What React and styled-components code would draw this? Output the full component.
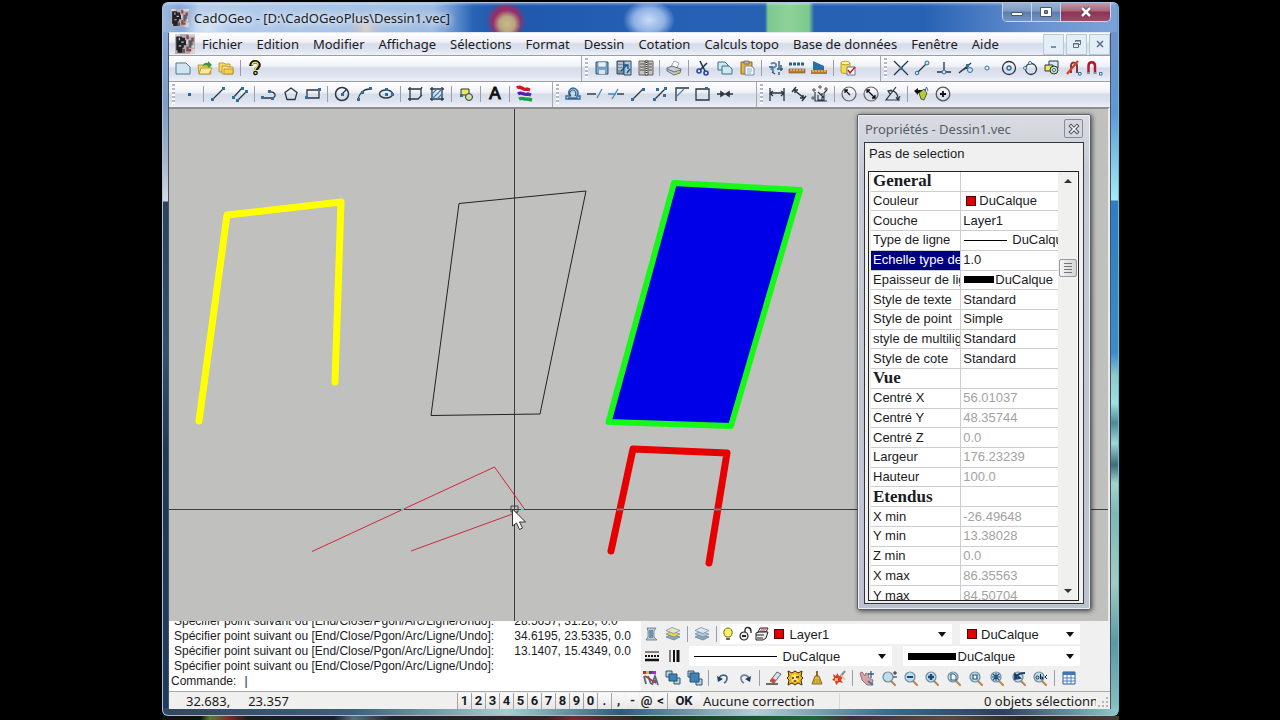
import React from "react";
import styled, { createGlobalStyle, css } from "styled-components";

const GlobalStyle = createGlobalStyle`
  * {
    box-sizing: border-box;
  }

  body {
    margin: 0;
    background: #000;
    font-family: "Liberation Sans", Arial, sans-serif;
    font-size: 13px;
    color: #1b1b24;
  }

  button, input, select {
    font: inherit;
    color: inherit;
    margin: 0;
    padding: 0;
    border: 0;
    background: none;
  }
`;

const uiFont = css`
  font-family: "Noto Sans", "Open Sans", sans-serif;
`;

const Desktop = styled.div`
  min-height: 100vh;
  display: flex;
  flex-direction: column;
  padding: 2px 161px 0 162px;
`;

const Window = styled.div`
  flex: 1;
  display: flex;
  flex-direction: column;
  min-height: 0;
  padding: 0 7px 6px 5px;
  border: 1px solid #a9c6e2;
  border-right-color: #4fc6dc;
  border-bottom-color: #6fd4de;
  border-radius: 6px;
  background:
    linear-gradient(90deg, #31475f 0, #3d6078 20%, #a8cdd0 36%, #315a78 48%, #b5cfd8 62%, #3b6a86 76%, #2d3f5c 88%, #8fc8cc 100%) left bottom / 100% 7px no-repeat,
    linear-gradient(180deg, #8fb0dc 0, #7d9cc6 100px, #aab8c8 160px, #d5dbe1 198px, #2c4258 199px, #34506c 350px, #22384f 450px, #1f3a5a 100%) left top / 8px 100% no-repeat,
    linear-gradient(180deg, #6f93cf 0, #6f93cf 40px, #5d9ad6 110px, #a6ecf6 197px, #2f7cc0 198px, #3c8ccc 350px, #8cc8cc 372px, #9fe0e0 400px, #4b8a98 420px, #9fd8d6 440px, #3c6c78 462px, #a6d4cc 480px, #7eb8b4 510px, #a4ccc0 580px, #5a98a4 640px, #8cc4c4 100%) right top / 8px 100% no-repeat,
    #3470b6;
`;

const DesktopStrip = styled.div`
  height: 4px;
  background: linear-gradient(90deg, #111 0, #111 4%, #5c7a3c 5%, #7c2a2a 7%, #1c1c22 9%, #16202c 18%, #58707c 20%, #20202a 24%, #33222a 40%, #6c2c34 43%, #1c2c20 50%, #24663c 68%, #38303a 72%, #5a4a44 82%, #282428 90%, #443c34 100%);
`;

const TitleBar = styled.header`
  display: flex;
  align-items: center;
  height: 29px;
  margin: 0 -6px 0 -5px;
  padding-left: 8px;
  border-radius: 5px 5px 0 0;
  background:
    linear-gradient(180deg, #ffffff55 0, #ffffff00 3px),
    linear-gradient(90deg, #ffffff00 16px, #d0e0f4bb 36px, #c4d8f0bb 270px, #b4cfee00 310px),
    radial-gradient(ellipse 22px 14px at 44px 26px, #e8f2fa 0, #e8f2fa00 100%),
    radial-gradient(circle 18px at 203px 26px, #f2c25c 0, #e0705a88 50%, #e0705a00 100%),
    radial-gradient(circle 14px at 344px 21px, #c8bc84 0, #b8a484 55%, #a0205a00 100%),
    radial-gradient(circle 22px at 343px 18px, #a3275c 0, #93306a 60%, #3a4a9000 90%),
    radial-gradient(ellipse 26px 20px at 486px 17px, #c9dcf4 0, #8db0e4 60%, #3a6ec000 100%),
    linear-gradient(90deg, #ffffff00 0, #ffffff00 602px, #7cc88c 605px, #8ed29a 626px, #7cc88c 646px, #ffffff00 651px),
    linear-gradient(90deg, #9db9de 0, #6f9cd6 30px, #2f6cbc 290px, #1f58ac 340px, #2560b4 480px, #2762b4 760px, #6c94d0 880px, #7ba2d8 100%);
`;

const TitleText = styled.h1`
  ${uiFont}
  flex: 1;
  margin: 0 0 0 5px;
  font-size: 13px;
  font-weight: 400;
  line-height: 18px;
  white-space: nowrap;
  text-shadow: 0 0 6px #fff, 0 0 10px #fff;
`;

const Caption = styled.div`
  display: flex;
  align-self: flex-start;
  height: 19px;
  margin-right: 6px;
  border: 1px solid #c6d8ee;
  border-top: 0;
  border-radius: 0 0 5px 5px;
  overflow: hidden;
`;

const CaptionButton = styled.button`
  display: flex;
  align-items: center;
  justify-content: center;
  width: ${p => (p.$close ? 49 : 29)}px;
  border-right: ${p => (p.$close ? 0 : "1px solid #c6d8ee")};
  background: ${p =>
    p.$close
      ? "linear-gradient(180deg, #c49aa8 0, #a8647c 45%, #8a3450 50%, #a04a6c 100%)"
      : "linear-gradient(180deg, #9cb4d4 0, #7f9cc6 45%, #5a7cae 50%, #7496c6 100%)"};
`;

const Client = styled.div`
  flex: 1;
  display: flex;
  flex-direction: column;
  min-height: 0;
  border: 1px solid #44546a;
  border-top: 1px solid #dfe8f2;
  border-bottom: 0;
  background: #f0f0f0;
`;

const band = css`
  background: linear-gradient(180deg, #ffffff 0, #f0f2f8 40%, #d7dce9 50%, #dfe4f0 80%, #eef1f8 100%);
`;

const MenuBar = styled.nav`
  ${uiFont}
  ${band}
  display: flex;
  align-items: center;
  height: 22px;
  padding: 0 0 0 6px;
`;

const MenuItem = styled.button`
  font-size: 13px;
  line-height: 20px;
  padding: 0 7px;
  white-space: nowrap;
`;

const MdiButtons = styled.div`
  display: flex;
  gap: 2px;
  margin-left: auto;
`;

const MdiButton = styled.button`
  display: flex;
  align-items: center;
  justify-content: center;
  width: 21px;
  height: 21px;
  border: 1px solid #b8c9da;
  background: #e4eef7;
`;

const ToolRow = styled.div`
  display: flex;
  height: 26px;
  border-top: 1px solid #9c9ea6;
`;

const ToolBand = styled.div`
  ${band}
  flex: ${p => (p.$width ? `0 1 ${p.$width}px` : "1 1 0")};
  display: flex;
  align-items: center;
  min-width: 0;
  padding: 0 0 2px 3px;
  border-left: ${p => (p.$first ? 0 : "1px solid #a4a8b2")};
`;

const Grip = styled.span`
  flex: 0 0 3px;
  height: 20px;
  margin-right: 3px;
  background: repeating-linear-gradient(180deg, #b4b8c4 0, #b4b8c4 2px, #ffffff 2px, #ffffff 4px);
`;

const Items = styled.div`
  display: flex;
  align-items: center;
  flex: 0 1 ${p => p.$width}px;
  min-width: 0;
`;

const ToolButton = styled.button`
  flex: 1 1 0;
  display: flex;
  align-items: center;
  justify-content: center;
  min-width: 0;
  height: 20px;
`;

const Separator = styled.span`
  flex: 0 0 7px;
  height: 16px;
  background: linear-gradient(90deg, #0000 3px, #9a9eac 3px, #9a9eac 4px, #0000 4px);
`;

const Icon = styled.svg`
  flex: none;
  display: block;
  width: ${p => p.$size || 16}px;
  height: ${p => p.$size || 16}px;
  overflow: visible;
`;

const Canvas = styled.main`
  flex: 1;
  position: relative;
  min-height: 0;
  border-top: 2px solid #8e8e8e;
  border-right: 2px solid #ececea;
  background: #c0c0be;
`;

const Drawing = styled.svg`
  position: absolute;
  left: 0;
  top: 0;
  width: 100%;
  height: 100%;
`;

const Palette = styled.section`
  position: absolute;
  top: 5px;
  right: 17px;
  width: 234px;
  padding: 0 6px 5px;
  border: 1px solid #5c626c;
  border-radius: 2px;
  background: linear-gradient(180deg, #d9dce2 0, #c5cad3 60px, #bcc3ce 100%);
  box-shadow: 1px 1px 5px #000a, inset 0 0 0 1px #eef0f4;
`;

const PaletteTitle = styled.div`
  ${uiFont}
  display: flex;
  align-items: center;
  justify-content: space-between;
  height: 27px;
  padding: 0 1px;
  font-size: 13px;
  color: #565c66;
`;

const PaletteClose = styled.button`
  display: flex;
  align-items: center;
  justify-content: center;
  width: 19px;
  height: 19px;
  border: 1px solid #868c96;
  border-radius: 2px;
  background: #d4d8de;
`;

const PaletteBody = styled.div`
  padding: 0 4px 2px 3px;
  border: 1px solid #33363c;
  background: #f0f0f0;
`;

const PaletteStatus = styled.p`
  margin: 0;
  padding-left: 1px;
  height: 28px;
  line-height: 22px;
`;

const GridFrame = styled.div`
  display: flex;
  height: 430px;
  border: 1px solid #222;
  padding-left: 2px;
`;

const GridScroll = styled.div`
  flex: 1;
  min-width: 0;
  overflow: hidden;
  background: #fff;
`;

const PropTable = styled.table`
  width: 100%;
  height: 434px;
  border-collapse: collapse;
  table-layout: fixed;
`;

const PropCell = styled.td`
  padding: 0 0 0 2px;
  width: ${p => p.$width || "auto"};
  line-height: 16px;
  border-bottom: 1px solid #cdcdcd;
  white-space: nowrap;
  overflow: hidden;
  color: ${p => (p.$readOnly ? "#a2a2a2" : "inherit")};
`;

const PropName = styled(PropCell).attrs({ as: "th", scope: "row" })`
  border-right: 1px solid #cdcdcd;
  text-align: left;
  font-weight: ${p => (p.$group ? 700 : 400)};
  font-family: ${p => (p.$group ? '"Liberation Serif", serif' : "inherit")};
  font-size: ${p => (p.$group ? 17 : 13)}px;
  ${p => p.$active && "background: #000080; color: #fff;"}
`;

const Value = styled.span`
  display: flex;
  align-items: center;
`;

const Swatch = styled.span`
  flex: none;
  width: 10px;
  height: 10px;
  margin: 0 ${p => p.$gap || 3}px 0 3px;
  border: 1px solid #500;
  background: #e00000;
`;

const Stroke = styled.span`
  flex: none;
  width: ${p => p.$width}px;
  height: ${p => p.$weight}px;
  margin: 0 ${p => p.$gap || 1}px 0 1px;
  background: #000;
`;

const ScrollBar = styled.div`
  flex: 0 0 20px;
  display: flex;
  flex-direction: column;
  align-items: center;
  border-right: 1px solid #fff;
  background: #f0f0ef;
`;

const ScrollButton = styled.button`
  display: flex;
  align-items: center;
  justify-content: center;
  width: 18px;
  height: 18px;
  ${p => p.$thumb && "margin: 69px 0 auto; border: 1px solid #9a9a9a; border-radius: 2px; background: linear-gradient(90deg, #f4f4f4, #d4d4d8);"}
`;

const Dock = styled.div`
  display: flex;
  height: 70px;
`;

const Console = styled.div`
  flex: 1 1 0;
  display: flex;
  flex-direction: column;
  justify-content: flex-end;
  min-width: 0;
  padding: 0 0 2px 2px;
  overflow: hidden;
  background: #fff;
  font-size: 12px;
`;

const LogLine = styled.div`
  flex: none;
  display: flex;
  gap: 20px;
  padding-left: 3px;
  line-height: 15px;
  white-space: nowrap;
`;

const Prompt = styled.label`
  flex: none;
  display: flex;
  gap: 8px;
  line-height: 15px;
`;

const PromptInput = styled.input`
  flex: 1;
  min-width: 0;
  height: 15px;
  outline: none;
`;

const LayerPane = styled.div`
  flex: 1 1 0;
  display: flex;
  flex-direction: column;
  min-width: 0;
  padding-top: 2px;
  background: #f0f0f0;
`;

const PaneRow = styled.div`
  display: flex;
  align-items: center;
  height: 22px;
  padding-right: ${p => p.$pad || 0}px;
`;

const Combo = styled.div`
  flex: ${p => (p.$width ? `0 1 ${p.$width}px` : "1 1 0")};
  display: flex;
  align-items: center;
  gap: 1px;
  min-width: 0;
  height: 20px;
  padding-left: ${p => (p.$flush ? 0 : 4)}px;
  margin-left: ${p => p.$gap || 0}px;
  background: #fff;
`;

const Select = styled.select`
  appearance: none;
  flex: 1;
  min-width: 0;
  height: 20px;
  outline: none;
`;

const Arrow = styled.svg`
  flex: none;
  width: 8px;
  height: 5px;
  margin-right: 6px;
  pointer-events: none;
`;

const StatusBar = styled.footer`
  ${uiFont}
  display: flex;
  align-items: center;
  height: 18px;
  border-top: 1px solid #a8a8a8;
  background: #f0f0ee;
  font-size: 13px;
  line-height: 16px;
  white-space: nowrap;
`;

const Coords = styled.div`
  display: flex;
  flex: 1 1 0;
  gap: 18px;
  padding-left: 17px;
`;

const Keys = styled.div`
  display: flex;
`;

const Key = styled.button`
  width: ${p => (p.$wide ? 33 : 14)}px;
  height: 16px;
  border-left: 1px solid ${p => (p.$flat ? "#f0f0ee" : "#a4a4a4")};
  background: linear-gradient(180deg, #fafafa, #e6e6e6);
  font-family: Roboto, sans-serif;
  font-size: 13px;
  font-weight: 700;
  line-height: 15px;
`;

const Mode = styled.div`
  flex: 0 0 140px;
  padding-left: 3px;
  border-right: 1px solid #d8d8d6;
`;

const Selection = styled.div`
  flex: 0 0 258px;
  display: flex;
  align-items: flex-end;
  justify-content: flex-end;
  margin-left: 12px;
`;

const SelectionText = styled.span`
  flex: 0 0 112px;
  overflow: hidden;
`;

const D = "#2a3642";
const B = "#2e6f9e";
const dot = (x, y, key) => <rect key={key} x={x - 1} y={y - 1} width="3" height="3" fill={B} />;
const line = (d, color = D, w = 1.3) => <path d={d} fill="none" stroke={color} strokeWidth={w} />;

const page = (x, y, w = 9, h = 9) => (
  <path d={`M${x} ${y}h${w - 3}l3 3v${h - 3}h-${w}z`} fill="#cfe8f0" stroke="#3f6f86" />
);

const lens = inner => (
  <>
    <path d="M10 11l4 4" stroke="#b98a4a" strokeWidth="2.2" strokeLinecap="round" />
    <circle cx="7" cy="7" r="5" fill="#c4dcea" stroke="#6c8c9e" strokeWidth="1.2" />
    {inner}
  </>
);

const sheets = (top, mid) => (
  <>
    <path d="M1 11l6-3 8 3-6 3z" fill="#8fa8bc" stroke="#5a7a90" strokeWidth=".7" />
    <path d="M1 8l6-3 8 3-6 3z" fill={mid} stroke="#6c8496" strokeWidth=".7" />
    <path d="M1 4.500l6-3 8 3-6 3z" fill={top} stroke="#6c8496" strokeWidth=".7" />
  </>
);

const icons = {
  app: (
    <>
      <rect width="16" height="16" fill="#b4acae" />
      <path d="M0 0h4v2H0zM11 0h5v2h-5zM12 12h4v4h-4z" fill="#d8d2d2" />
      <path d="M1 2h4l1 1h2v2h1v4H7v2H6v4H2v-2H1z" fill="#222128" />
      <path d="M9 1h2v3H9zM13 3h2v3h-2zM9 10h2v2h2v2H9z" fill="#8a4a56" />
      <path d="M11 5h3v4h-1v2h-2zM6 12h2v3H6z" fill="#5c5a62" />
      <path d="M3 3h1v2H3zM5 6h2v1H5zM3 9h2v1H3z" fill="#c8c8cc" />
      <path d="M9 5h1v3H9zM14 9h1v2h-1z" fill="#ece4e4" />
    </>
  ),
  blank: <path d="M1 3h10l4 4v7H1z" fill="#cfe6f0" stroke="#54788c" />,
  open: (
    <>
      <path d="M1 5h5l1 1h6l1 8H2z" fill="#f2d65c" stroke="#a98a28" strokeWidth=".8" />
      <path d="M2 14l2-6h11l-3 6z" fill="#fbeb96" stroke="#a98a28" strokeWidth=".8" />
      <path d="M5 7c1-4 4-5 6-4V1l4 4-4 3V6C9 5 7 5 5 7z" fill="#3c9a34" />
    </>
  ),
  folders: (
    <>
      <path d="M1 3h5l1 1h5v8H1z" fill="#f7d868" stroke="#b08c22" strokeWidth=".8" />
      <path d="M4 6h5l1 1h5v7H4z" fill="#fbe48a" stroke="#b08c22" strokeWidth=".8" />
      <path d="M6 9h9v5H6z" fill="#f6cf4e" stroke="#b08c22" strokeWidth=".8" />
    </>
  ),
  help: (
    <>
      <path d="M4 6c0-6 8-5 8-1 0 3-3 3-3 5" fill="none" stroke="#111" strokeWidth="3.600" />
      <path d="M5 5.500c0-4 6-4 6-1 0 2.500-3 3-3 5.500" fill="none" stroke="#e8de40" strokeWidth="1.500" />
      <circle cx="8.500" cy="13" r="1.700" fill="#e8de40" stroke="#111" strokeWidth="1.300" />
    </>
  ),
  save: (
    <>
      <path d="M2 2h12v12H2z" fill="#7aa4c8" stroke="#2f5878" />
      <path d="M4 2h8v5H4z" fill="#e6f0f6" stroke="#5c84a4" strokeWidth=".6" />
      <path d="M5 10h6v4H5z" fill="#dce4ea" />
    </>
  ),
  saveAll: (
    <>
      <path d="M1 1h7v13H1z" fill="#7890a4" stroke="#33475a" />
      <path d="M2 3h5M2 6h5M2 9h5" stroke="#e8f0f6" />
      <path d="M8 1h7v14H8z" fill="#a9cbe0" stroke="#33475a" />
      <path d="M5 11l6-6M8 5h4v4M11 13l3-4" stroke="#1e5484" strokeWidth="1.400" fill="none" />
    </>
  ),
  archive: (
    <>
      <path d="M1 1h14v14H1z" fill="#c4c4c0" stroke="#66665f" />
      <path d="M2 4h4M2 7h4M2 10h4M11 4h3M11 7h3M11 10h3" stroke="#55554f" />
      <path d="M7 1h3v14H7z" fill="#f2f0e6" stroke="#333" strokeWidth=".8" />
      <path d="M8.500 2v12" stroke="#333" strokeDasharray="1 1" strokeWidth="2" />
    </>
  ),
  print: (
    <>
      <path d="M5 7l3-6 5 2-2 5z" fill="#fff" stroke="#8098ac" strokeWidth=".8" />
      <path d="M1 8l5-2 9 3-1 4-6 2-7-4z" fill="#c4ccd4" stroke="#4c5a66" strokeWidth=".8" />
      <path d="M1 9l7 3 7-2" stroke="#4c5a66" strokeWidth=".8" fill="none" />
      <path d="M10 13l3-1" stroke="#e0c040" strokeWidth="1.500" />
    </>
  ),
  cut: (
    <>
      <path d="M5 1l5 10M12 3L5 10" stroke="#1f3556" strokeWidth="1.600" fill="none" />
      <circle cx="4" cy="11" r="2" fill="none" stroke="#2946a0" strokeWidth="1.600" />
      <circle cx="11" cy="13" r="2" fill="none" stroke="#2946a0" strokeWidth="1.600" />
    </>
  ),
  copy: (
    <>
      {page(1, 2, 10, 8)}
      {page(5, 6, 10, 8)}
    </>
  ),
  paste: (
    <>
      <path d="M2 2h11v12H2z" fill="#e6b13c" stroke="#8c6a20" />
      <path d="M5 1h5v3H5z" fill="#b4b8bc" stroke="#5a5a5a" strokeWidth=".7" />
      <path d="M6 6h6l3 2v7H6z" fill="#edf5fb" stroke="#5c7ca0" strokeWidth=".8" />
      <path d="M8 9h5M8 11h5M8 13h4" stroke="#86a4c4" strokeWidth=".8" />
    </>
  ),
  options: (
    <>
      <path d="M3 4c2-2 6-1 5 2-1 2-4 1-5 4M5 9v3" stroke="#5a8cb4" strokeWidth="2" fill="none" />
      <path d="M11 1v7M13 5v6M1 7h4M9 9h6M4 12l3 2M11 12v3" stroke="#2c5878" strokeWidth="1.400" fill="none" />
    </>
  ),
  measure: (
    <>
      <path d="M0 4h16" stroke="#2c6088" strokeWidth="3" strokeDasharray="3 1" />
      <path d="M0 9h16v4H0z" fill="#b07c32" stroke="#7c5420" strokeWidth=".6" />
      <path d="M2 9v2M5 9v2M8 9v2M11 9v2M14 9v2" stroke="#f6dfa0" />
    </>
  ),
  area: (
    <>
      <path d="M2 1l11 5v5H2z" fill="#2d6ea6" />
      <path d="M0 10h16v4H0z" fill="#b07c32" />
      <path d="M2 10v2M5 10v2M8 10v2M11 10v2M14 10v2" stroke="#f6dfa0" />
    </>
  ),
  database: (
    <>
      <path d="M1 3v9c0 2 9 2 9 0V3z" fill="#f4dc4c" stroke="#a88e1c" strokeWidth=".8" />
      <ellipse cx="5.500" cy="3" rx="4.500" ry="1.800" fill="#fdf19c" stroke="#a88e1c" strokeWidth=".8" />
      <path d="M7 7h8v8H7z" fill="#fff" stroke="#5a7c94" />
      <path d="M8 10l2 3 5-6" stroke="#d02020" strokeWidth="1.600" fill="none" />
    </>
  ),
  snapCross: (
    <>
      {line("M1 1l14 14M15 1L1 15")}
      {dot(8, 8)}
    </>
  ),
  snapEnd: (
    <>
      {line("M2 14L13 3")}
      <circle cx="3" cy="13" r="1.800" fill="#cfe4f2" stroke={B} />
      <circle cx="13" cy="3" r="2" fill="#cfe4f2" stroke={B} />
    </>
  ),
  snapPerp: (
    <>
      {line("M8 2v11M1 12h14")}
      <circle cx="8" cy="12" r="2" fill="#cfe4f2" stroke={B} />
    </>
  ),
  snapTangent: (
    <>
      {line("M1 13L13 3M1 13c3-3 5-5 9-5")}
      <circle cx="12" cy="10" r="2.500" fill="#cfe4f2" stroke={B} />
      {dot(9, 5)}
    </>
  ),
  snapPoint: <circle cx="8" cy="8" r="2" fill="#eef" stroke={B} />,
  snapCenter: (
    <>
      <circle cx="8" cy="8" r="6.500" fill="none" stroke={D} strokeWidth="1.300" />
      <circle cx="8" cy="8" r="2" fill="#cfe4f2" stroke={B} strokeWidth="1.400" />
    </>
  ),
  snapQuad: (
    <>
      <circle cx="9" cy="9" r="5.500" fill="none" stroke={D} strokeWidth="1.300" />
      <circle cx="3" cy="8" r="1.500" fill="#fff" stroke={B} />
      <circle cx="8" cy="3" r="1.500" fill="#fff" stroke={B} />
    </>
  ),
  snapInsert: (
    <>
      <path d="M5 1h9v7H5z" fill="#d8ecf6" stroke={D} />
      <path d="M1 5h8v6H1z" fill="#f1e55c" stroke={D} />
      <circle cx="10" cy="10" r="4" fill="#cfe0a0" stroke={D} />
      <circle cx="10" cy="10" r="1.500" fill="#fff" stroke={B} />
    </>
  ),
  snapNone: (
    <>
      <path d="M5 13V6c0-5 6-4 6 0v7" fill="none" stroke="#7c3c44" strokeWidth="2" />
      <path d="M1 14L12 1" stroke="#e03c20" strokeWidth="2.200" />
      <path d="M12.500 12.500h2.500v2.500h-2.500z" fill="#fff" stroke={B} />
    </>
  ),
  snapMagnet: (
    <>
      <path d="M1.500 12V6c0-5 6.500-5 6.500 0v6" fill="none" stroke="#b3172e" strokeWidth="2.500" />
      <path d="M0 13h3M6.500 13h3" stroke="#8a8f96" strokeWidth="2" />
      <path d="M12.500 12.500h2.500v2.500h-2.500z" fill="#fff" stroke={B} />
    </>
  ),
  point: <rect x="7" y="7" width="3" height="3" fill="#2568a8" />,
  line: (
    <>
      {line("M2 14L14 2")}
      {dot(2, 13)}
      {dot(13, 2)}
    </>
  ),
  doubleLine: (
    <>
      {line("M1 12L10 2M5 15l10-10")}
      {dot(1, 11)}
      {dot(10, 2)}
      {dot(5, 14)}
      {dot(14, 5)}
    </>
  ),
  polyline: (
    <>
      {line("M1 12h10M12 12c4-2 2-7-4-6")}
      {dot(1, 11)}
      {dot(11, 12)}
      {dot(8, 5)}
    </>
  ),
  polygon: line("M8 2l6 4.500L12 13.500H4L2 6.500z"),
  rectangle: (
    <>
      {line("M2 4h12v8H2z")}
      {dot(1, 11)}
      {dot(14, 3)}
    </>
  ),
  circle: (
    <>
      <circle cx="8" cy="8" r="6.500" fill="none" stroke={D} strokeWidth="1.500" />
      {line("M8 8l5-5")}
      {dot(8, 8)}
    </>
  ),
  arc: (
    <>
      {line("M2 14C3 8 7 3 14 3")}
      {dot(2, 13)}
      {dot(6, 6)}
      {dot(14, 2)}
    </>
  ),
  ellipse: (
    <>
      <ellipse cx="8" cy="8" rx="6.500" ry="4" fill="none" stroke={D} strokeWidth="1.400" />
      {dot(8, 8)}
      {dot(14, 8)}
      {dot(8, 3)}
    </>
  ),
  crop: line("M3 1v12h8l4-4M1 3h13v8M1 13h2v2M14 3l1-2"),
  hatch: (
    <>
      {line("M3 1v14M13 1v14M1 3h14M1 13h14")}
      {line("M3 8l5-5M3 13L13 3M8 13l5-5", "#3d7cb8", 1.2)}
    </>
  ),
  block: (
    <>
      <path d="M3 3h8v6H3z" fill="#f1e55c" stroke={D} />
      <circle cx="11" cy="11" r="3.500" fill="#cfe0a0" stroke={D} />
      {dot(3, 9)}
    </>
  ),
  letter: null,
  colors: (
    <>
      <path d="M1 2c4-3 6 3 10 1l3 1" stroke="#d01828" strokeWidth="3.400" fill="none" />
      <path d="M2 8c4-3 6 2 10 0l3 1" stroke="#4a20c0" strokeWidth="3.400" fill="none" />
      <path d="M3 13c4-2 6 1 9 0l4 1" stroke="#18a040" strokeWidth="3.400" fill="none" />
    </>
  ),
  offset: (
    <>
      <path d="M1 13h14v-3h-3c3-4-1-8-4-8S2 6 5 10H1z" fill="#bcd8ee" stroke={B} strokeWidth="1.400" />
      <path d="M3 12h10M6 10c-3-3 0-6 2-6s4 3 2 6" fill="none" stroke={D} />
    </>
  ),
  trim: (
    <>
      {line("M0 8h9", D, 1.4)}
      {line("M10 12l5-9", "#4a86b8")}
    </>
  ),
  extend: (
    <>
      {line("M9 8h7", D, 1.4)}
      {line("M4 13l6-10M0 8h8", "#4a86b8")}
    </>
  ),
  stretch: (
    <>
      {line("M2 14L13 3")}
      {dot(2, 13)}
      {dot(13, 3)}
    </>
  ),
  split: (
    <>
      {line("M2 14L14 2")}
      {dot(5, 3)}
      {dot(2, 13)}
      {dot(13, 2)}
      {dot(12, 9)}
    </>
  ),
  chamfer: (
    <>
      {line("M2 15V2h13")}
      {line("M3 10l7-7", "#4a86b8")}
    </>
  ),
  closeShape: (
    <>
      {line("M10 3H1v11h13V3h-2")}
      {dot(11, 2)}
    </>
  ),
  join: line("M0 8h6M16 8h-6M4 6l3 2-3 2zM12 6L9 8l3 2z", D, 1.6),
  dimLinear: line("M1 2v13M15 2v13M1 7h14M4 5L1 7l3 3M12 5l3 2-3 3"),
  dimAligned: line("M3 4l10 8M1 6l4-5M11 15l4-5M4 7V4h3M12 9v3H9", D, 1.5),
  dimOrd: (
    <>
      {line("M3 6v9h12M6 9v5h6V7l3-3M6 6l6 6M10 7v7", D, 1.1)}
      {line("M1 3h2v2H1zM7 0h2v2H7zM13 2h2v2h-2zM0 11h2v2H0z", "#555", 1)}
    </>
  ),
  dimRadius: (
    <>
      <circle cx="8" cy="8" r="7" fill="none" stroke="#666" strokeWidth="1.200" />
      {line("M9 9L4 4M4 7V4h3", "#111")}
    </>
  ),
  dimDiameter: (
    <>
      <circle cx="8" cy="8" r="7" fill="none" stroke="#666" strokeWidth="1.200" />
      {line("M4 4l8 8M4 7V4h3M12 9v3H9", "#111")}
    </>
  ),
  dimAngle: line("M11 1L1 14h14M5 5c5-1 8 3 8 8M5 8l-2-3 4-1M11 11l2 3 2-4", D, 1.2),
  leader: (
    <>
      <path d="M1 5l4-3v2h4v3H5v2z" fill="#111" />
      <path d="M6 7l5-4 3 4-3 7-3-1z" fill="#b8c83c" stroke="#384010" strokeWidth=".8" />
      {line("M12 5l1.500-4L15 5", "#2c6ea8", 1)}
    </>
  ),
  target: (
    <>
      <circle cx="8" cy="8" r="6.800" fill="none" stroke="#555" strokeWidth="1.300" />
      {line("M5 8h6M8 5v6", "#111", 1.8)}
    </>
  ),
  script: (
    <>
      <path d="M4 2h9l-2 3v6l3 3H3l2-3V5z" fill="#b8cbdc" stroke="#55748e" strokeWidth=".8" />
      <path d="M6 5h4M6 7h4M6 9h4M6 11h4" stroke="#33526c" />
    </>
  ),
  layersYellow: sheets("#e8e8c0", "#ecd63c"),
  layersBlue: sheets("#dce8f0", "#b0c8dc"),
  lineType: (
    <>
      <path d="M1 4h14" stroke="#111" strokeWidth="1" />
      <path d="M1 8h14" stroke="#111" strokeWidth="2" strokeDasharray="2 1" />
      <path d="M1 12h14" stroke="#111" strokeWidth="2.500" />
    </>
  ),
  lineWeight: (
    <>
      <path d="M4 2v12" stroke="#111" strokeWidth="1" />
      <path d="M8 2v12" stroke="#111" strokeWidth="2" />
      <path d="M12 2v12" stroke="#111" strokeWidth="3" />
    </>
  ),
  bulb: (
    <>
      <path d="M6 11C2 7 4 2 8 2s6 5 2 9z" fill="#fbf168" stroke="#6c6420" />
      <path d="M6 12h4v2H6z" fill="#666" />
    </>
  ),
  lock: (
    <>
      <path d="M8 8V4c0-4 6-3 6 1v2" fill="none" stroke="#222" strokeWidth="1.300" />
      <circle cx="7" cy="10" r="4" fill="#eee" stroke="#222" strokeWidth="1.200" />
      <path d="M5 9h4v2H5z" fill="#222" />
    </>
  ),
  plotter: (
    <>
      <path d="M4 6l2-4h8l-2 4z" fill="#fff" stroke="#222" />
      <path d="M7 3h5M6 5h5" stroke="#c03040" />
      <path d="M2 7l3-1h9l-2 6-3 2H2z" fill="#eee" stroke="#222" />
      <path d="M2 9h8M3 12h6" stroke="#222" />
    </>
  ),
  props: (
    <>
      <path d="M0 1h3v3H0z" fill="#e02020" />
      <path d="M3 1h3v3H3z" fill="#e0c020" />
      <path d="M6 1h3v3H6z" fill="#2040e0" />
      <path d="M9 1h4v3H9z" fill="#c020c0" />
      <path d="M1 6l2 8M5 6l3 8M9 15l3-9 3 9M9 11h5" fill="none" stroke="#55697a" strokeWidth="1.800" />
      <path d="M2 6l11 7" stroke="#a04048" strokeWidth="1.800" />
    </>
  ),
  front: (
    <>
      <path d="M9 8h6v6H9z" fill="#b8d0e4" stroke="#33546e" />
      <path d="M1 1h6v6H1z" fill="#b8d0e4" stroke="#33546e" />
      <path d="M4 4h8v7H4z" fill="#3f82b8" stroke="#23506e" />
    </>
  ),
  back: (
    <>
      <path d="M1 1h6v6H1z" fill="#b8d0e4" stroke="#33546e" />
      <path d="M9 9h6v6H9z" fill="#b8d0e4" stroke="#33546e" />
      <path d="M3 3h9v9H3z" fill="#3f82b8" stroke="#23506e" />
    </>
  ),
  undo: (
    <>
      <path d="M4 9c1-5 8-5 8-1 0 2-1 4-3 5" fill="none" stroke="#4a6484" strokeWidth="1.600" />
      <path d="M2 6l1 6 5-3z" fill="#1d3c66" />
    </>
  ),
  redo: (
    <>
      <path d="M12 9C11 4 4 4 4 8c0 2 1 4 3 5" fill="none" stroke="#6a8098" strokeWidth="1.600" />
      <path d="M14 6l-1 6-5-3z" fill="#1d3c66" />
    </>
  ),
  eraser: (
    <>
      <path d="M4 11L11 2l4 2-7 9z" fill="#d8e0e4" stroke="#445" strokeWidth=".8" />
      <path d="M4 11l2-3 4 2-2 3z" fill="#d44830" />
      <path d="M0 14h12" stroke="#333" strokeWidth="1.400" />
    </>
  ),
  explode: (
    <>
      <path d="M1 1l4 2 3-2 3 2 4-2-1 5 2 2-2 2 1 5-4-2-3 2-3-2-4 2 1-5-2-2 2-2z" fill="#f0b820" stroke="#3c2a08" />
      <path d="M5 5l6 6M11 5l-6 6M8 4v8" stroke="#fff48c" strokeWidth="1.200" />
      <path d="M5 8h2M9 7h3M7 11h2" stroke="#5c3008" strokeWidth="1.400" />
    </>
  ),
  broom: (
    <>
      <path d="M7 1h2v6H7z" fill="#8c6a24" />
      <path d="M6 6h4l3 8H3z" fill="#e4b83c" stroke="#7c5a14" strokeWidth=".9" />
      <path d="M6 9l-1 5M8 9v5M10 9l1 5" stroke="#b48a2c" strokeWidth=".9" />
    </>
  ),
  purge: (
    <>
      <path d="M9 7l5-6" stroke="#8c8c8c" strokeWidth="2" />
      <path d="M2 4l3 2 1-3 2 3 4 1-2 3 2 3-4-1-3 3-1-4-3-1 2-2z" fill="#d83c30" />
      <path d="M4 8h3v3H4z" fill="#f0c040" />
      <path d="M10 5l4 5" stroke="#e8c890" strokeWidth="1.500" />
    </>
  ),
  pan: (
    <>
      <path d="M1 3l2-1 3 4 1-3 2 1 1 4 4 2-1 5H8L3 10z" fill="#d4a4a8" stroke="#94686e" strokeWidth=".9" />
      <path d="M12 1v7M9 4h6" stroke="#33608c" strokeWidth="1.300" />
      <path d="M9 11l5 4" stroke="#4878a4" strokeWidth="2" />
    </>
  ),
  zoom: (
    <>
      {lens(null)}
      <path d="M12 3h4M14 1v4M12 7h4" stroke="#222" />
    </>
  ),
  zoomOut: lens(<path d="M4 7h6" stroke="#164a7c" strokeWidth="2" />),
  zoomIn: lens(<path d="M4 7h6M7 4v6" stroke="#164a7c" strokeWidth="2.400" />),
  zoomPage: lens(<path d="M5 4h3l2 2v4H5z" fill="#fff" stroke="#1e5080" />),
  zoomWindow: lens(<path d="M5 5h4v4H5z" fill="#fff" stroke="#1e5080" strokeWidth="1.200" />),
  zoomExtents: lens(<path d="M4 4l6 6M10 4l-6 6M7 3v8M3 7h8" stroke="#1e5080" strokeWidth="1.100" />),
  zoomPrev: lens(<path d="M5 8c1-4 5-5 9-5M4 9l0-5 5 4z" fill="none" stroke="#1d3c66" strokeWidth="1.800" />),
  zoomText: lens(
    <>
      <circle cx="5.500" cy="7.500" r="1.500" fill="none" stroke="#123" />
      <path d="M8.500 4v5h2V7h-2M15 5l-2 2 2 2" fill="none" stroke="#123" />
    </>
  ),
  table: (
    <>
      <path d="M2 2h12v12H2z" fill="#fff" stroke="#2c5c9c" />
      <path d="M2 2h12v3H2z" fill="#3c74b8" />
      <path d="M2 8h12M2 11h12M6 3v11M10 3v11" stroke="#4c80bc" />
    </>
  ),
};

const Glyph = styled.span`
  font-size: 17px;
  line-height: 20px;
  color: #111;
  -webkit-text-stroke: 1px #111;
`;

function Tools({ names }) {
  return names.split(" ").map((name, i) =>
    name === "|" ? (
      <Separator key={i} />
    ) : (
      <ToolButton key={i} type="button" aria-label={name}>
        {name === "letter" ? (
          <Glyph>A</Glyph>
        ) : (
          <Icon viewBox="0 0 16 16">{icons[name]}</Icon>
        )}
      </ToolButton>
    )
  );
}

const menus = [
  "Fichier",
  "Edition",
  "Modifier",
  "Affichage",
  "Sélections",
  "Format",
  "Dessin",
  "Cotation",
  "Calculs topo",
  "Base de données",
  "Fenêtre",
  "Aide",
];

const properties = [
  { name: "General", group: true },
  { name: "Couleur", value: "DuCalque", swatch: true },
  { name: "Couche", value: "Layer1" },
  { name: "Type de ligne", value: "DuCalque", stroke: [43, 1, 5] },
  { name: "Echelle type de", value: "1.0", active: true },
  { name: "Epaisseur de lig", value: "DuCalque", stroke: [30, 7, 1] },
  { name: "Style de texte", value: "Standard" },
  { name: "Style de point", value: "Simple" },
  { name: "style de multilign", value: "Standard" },
  { name: "Style de cote", value: "Standard" },
  { name: "Vue", group: true },
  { name: "Centré X", value: "56.01037", readOnly: true },
  { name: "Centré Y", value: "48.35744", readOnly: true },
  { name: "Centré Z", value: "0.0", readOnly: true },
  { name: "Largeur", value: "176.23239", readOnly: true },
  { name: "Hauteur", value: "100.0", readOnly: true },
  { name: "Etendus", group: true },
  { name: "X min", value: "-26.49648", readOnly: true },
  { name: "Y min", value: "13.38028", readOnly: true },
  { name: "Z min", value: "0.0", readOnly: true },
  { name: "X max", value: "86.35563", readOnly: true },
  { name: "Y max", value: "84.50704", readOnly: true },
];

const ask = "Spécifier point suivant ou [End/Close/Pgon/Arc/Ligne/Undo]:";
const log = ["28.5657, 31.28, 0.0", "34.6195, 23.5335, 0.0", "13.1407, 15.4349, 0.0", ""];

function Properties() {
  return (
    <Palette>
      <PaletteTitle>
        Propriétés - Dessin1.vec
        <PaletteClose type="button" aria-label="Fermer">
          <Icon viewBox="0 0 10 10" $size={10}>
            <path d="M2 2l6 6M8 2L2 8" stroke="#4c525c" strokeWidth="3.600" strokeLinecap="square" />
            <path d="M2 2l6 6M8 2L2 8" stroke="#f4f6f8" strokeWidth="1.600" strokeLinecap="square" />
          </Icon>
        </PaletteClose>
      </PaletteTitle>
      <PaletteBody>
        <PaletteStatus>Pas de selection</PaletteStatus>
        <GridFrame>
          <GridScroll>
            <PropTable>
              <tbody>
                {properties.map(p => (
                  <tr key={p.name}>
                    <PropName $width="48%" $group={p.group} $active={p.active}>
                      {p.name}
                    </PropName>
                    <PropCell $readOnly={p.readOnly}>
                      <Value>
                        {p.swatch && <Swatch />}
                        {p.stroke && (
                          <Stroke $width={p.stroke[0]} $weight={p.stroke[1]} $gap={p.stroke[2]} />
                        )}
                        {p.value}
                      </Value>
                    </PropCell>
                  </tr>
                ))}
              </tbody>
            </PropTable>
          </GridScroll>
          <ScrollBar>
            <ScrollButton type="button" aria-label="Haut">
              <Icon viewBox="0 0 8 8" $size={8}>
                <path d="M0 6l4-4 4 4z" fill="#333" />
              </Icon>
            </ScrollButton>
            <ScrollButton type="button" $thumb aria-label="Position">
              <Icon viewBox="0 0 8 8" $size={8}>
                <path d="M0 -.5h8M0 2.500h8M0 5.500h8M0 8.500h8" stroke="#777" />
              </Icon>
            </ScrollButton>
            <ScrollButton type="button" aria-label="Bas">
              <Icon viewBox="0 0 8 8" $size={8}>
                <path d="M0 2l4 4 4-4z" fill="#333" />
              </Icon>
            </ScrollButton>
          </ScrollBar>
        </GridFrame>
      </PaletteBody>
    </Palette>
  );
}

function Shapes() {
  return (
    <Drawing>
      <g transform="translate(-169 -108)" fill="none">
        <g stroke="#3c3c3c" shapeRendering="crispEdges">
          <path d="M0 508.500h3000M514.500 0v3000" />
        </g>
        <path d="M199 420l28-206 114-13-6 180" stroke="#ffff00" strokeWidth="7" strokeLinecap="round" strokeLinejoin="round" />
        <path d="M431 414.500L459 202.500l127-12.500-46 223z" stroke="#222" />
        <path d="M608.500 421L674 182l126 7-69 236z" fill="#0000e8" stroke="#18f818" strokeWidth="6" strokeLinejoin="round" />
        <path d="M611 550l22-102 94 4-18 110" stroke="#e60000" strokeWidth="7" strokeLinecap="round" strokeLinejoin="round" />
        <path d="M312 550.500L494.500 466l30 42M411 550l107-39" stroke="#d0283c" />
        <path d="M617 508.500h7M714 508.500h7" stroke="#7c7c7c" strokeWidth="2" />
        <path d="M401 508.500h3M521 508.500h3" stroke="#50d0c0" strokeWidth="2" />
        <path d="M511 505h7v6h-7z" stroke="#444" />
        <path d="M512.500 508v17l4-3 3 6.500 3-1.500-3-6h6z" fill="#fff" stroke="#333" />
      </g>
    </Drawing>
  );
}

function Drop({ label, value, width, gap, flush, children }) {
  return (
    <Combo $width={width} $gap={gap} $flush={flush}>
      {children}
      <Select aria-label={label} defaultValue={value}>
        <option>{value}</option>
      </Select>
      <Arrow viewBox="0 0 8 5">
        <path d="M0 0h8L4 5z" fill="#111" />
      </Arrow>
    </Combo>
  );
}

export default function App() {
  return (
    <>
      <GlobalStyle />
      <Desktop>
        <Window>
          <TitleBar>
            <Icon viewBox="0 0 16 16" $size={18}>{icons.app}</Icon>
            <TitleText>CadOGeo - [D:\CadOGeoPlus\Dessin1.vec]</TitleText>
            <Caption>
              <CaptionButton type="button" aria-label="Réduire">
                <Icon viewBox="0 0 12 12" $size={12}>
                  <path d="M.5 6.500h11v3H.5z" fill="#fff" stroke="#4a5870" />
                </Icon>
              </CaptionButton>
              <CaptionButton type="button" aria-label="Agrandir">
                <Icon viewBox="0 0 12 12" $size={12}>
                  <path d="M.5 1.500h11v9H.5zM4.500 4.500v3h3v-3z" fill="#fff" fillRule="evenodd" stroke="#4a5870" />
                </Icon>
              </CaptionButton>
              <CaptionButton type="button" $close aria-label="Fermer">
                <Icon viewBox="0 0 12 12" $size={12}>
                  <path d="M2 2l8 8M10 2l-8 8" stroke="#5a2c40" strokeWidth="4" />
                  <path d="M2 2l8 8M10 2l-8 8" stroke="#fff" strokeWidth="2.600" />
                </Icon>
              </CaptionButton>
            </Caption>
          </TitleBar>
          <Client>
            <MenuBar>
              <Icon viewBox="0 0 16 16" $size={20}>{icons.app}</Icon>
              {menus.map(m => (
                <MenuItem key={m} type="button">{m}</MenuItem>
              ))}
              <MdiButtons>
                <MdiButton type="button" aria-label="Réduire le dessin">
                  <Icon viewBox="0 0 10 10" $size={10}>
                    <path d="M2 8h5" stroke="#5c7088" strokeWidth="1.500" />
                  </Icon>
                </MdiButton>
                <MdiButton type="button" aria-label="Restaurer le dessin">
                  <Icon viewBox="0 0 10 10" $size={10}>
                    <path d="M3.500 3V1.500h5v4H7M1.500 4.500h5v4h-5zM1 5h6M3 2h6" fill="none" stroke="#5c7088" />
                  </Icon>
                </MdiButton>
                <MdiButton type="button" aria-label="Fermer le dessin">
                  <Icon viewBox="0 0 10 10" $size={10}>
                    <path d="M2 2l6 6M8 2L2 8" stroke="#5c7088" strokeWidth="1.600" />
                  </Icon>
                </MdiButton>
              </MdiButtons>
            </MenuBar>
            <ToolRow>
              <ToolBand $first>
                <Items $width={94}>
                  <Tools names="blank open folders | help" />
                </Items>
              </ToolBand>
              <ToolBand $width={299}>
                <Grip />
                <Items $width={268}>
                  <Tools names="save saveAll archive | print | cut copy paste | options measure area | database" />
                </Items>
              </ToolBand>
              <ToolBand $width={230}>
                <Grip />
                <Items $width={216}>
                  <Tools names="snapCross snapEnd snapPerp snapTangent snapPoint snapCenter snapQuad snapInsert snapNone snapMagnet" />
                </Items>
              </ToolBand>
            </ToolRow>
            <ToolRow>
              <ToolBand $first>
                <Grip />
                <Items $width={357}>
                  <Tools names="point | line doubleLine | polyline polygon rectangle | circle arc ellipse | crop hatch | block | letter | colors" />
                </Items>
              </ToolBand>
              <ToolBand $width={204}>
                <Grip />
                <Items $width={174}>
                  <Tools names="offset trim extend stretch split chamfer closeShape join" />
                </Items>
              </ToolBand>
              <ToolBand $width={354}>
                <Grip />
                <Items $width={188}>
                  <Tools names="dimLinear dimAligned dimOrd | dimRadius dimDiameter dimAngle | leader target" />
                </Items>
              </ToolBand>
            </ToolRow>
            <Canvas>
              <Shapes />
              <Properties />
            </Canvas>
            <Dock>
              <Console>
                {log.map((coords, i) => (
                  <LogLine key={i}>
                    <span>{ask}</span>
                    <span>{coords}</span>
                  </LogLine>
                ))}
                <Prompt>
                  Commande:
                  <PromptInput defaultValue="|" />
                </Prompt>
              </Console>
              <LayerPane>
                <PaneRow $pad={30}>
                  <Items $width={79}>
                    <Tools names="script layersYellow | layersBlue |" />
                  </Items>
                  <Drop label="Calque" value="Layer1" flush>
                    <Icon viewBox="0 0 16 16">{icons.bulb}</Icon>
                    <Icon viewBox="0 0 16 16">{icons.lock}</Icon>
                    <Icon viewBox="0 0 16 16">{icons.plotter}</Icon>
                    <Swatch $gap={5} />
                  </Drop>
                  <Drop label="Couleur" value="DuCalque" width={120} gap={8}>
                    <Swatch />
                  </Drop>
                </PaneRow>
                <PaneRow $pad={30}>
                  <Items $width={44}>
                    <Tools names="lineType lineWeight" />
                  </Items>
                  <Drop label="Type de ligne" value="DuCalque" width={203} gap={4}>
                    <Stroke $width={83} $weight={1} $gap={5} />
                  </Drop>
                  <Drop label="Epaisseur" value="DuCalque" gap={11}>
                    <Stroke $width={48} $weight={7} />
                  </Drop>
                </PaneRow>
                <PaneRow $pad={30}>
                  <Items $width={440}>
                    <Tools names="props front back | undo redo | eraser explode broom purge | pan zoom zoomOut zoomIn zoomPage zoomWindow zoomExtents zoomPrev zoomText | table" />
                  </Items>
                </PaneRow>
              </LayerPane>
            </Dock>
            <StatusBar>
              <Coords>
                <span>32.683,</span>
                <span>23.357</span>
              </Coords>
              <Keys>
                {[..."1234567890.,-@<"].map(k => (
                  <Key key={k} type="button" $flat={"-@<".includes(k)}>{k}</Key>
                ))}
                <Key type="button" $wide>OK</Key>
              </Keys>
              <Mode>Aucune correction</Mode>
              <Selection>
                <SelectionText>0 objets sélectionnés</SelectionText>
                <Icon viewBox="0 0 14 14" $size={14}>
                  <path d="M10 3h2M10 7h2M6 7h2M10 11h2M6 11h2M2 11h2" stroke="#b4b4b4" strokeWidth="2" />
                </Icon>
              </Selection>
            </StatusBar>
          </Client>
        </Window>
        <DesktopStrip />
      </Desktop>
    </>
  );
}
